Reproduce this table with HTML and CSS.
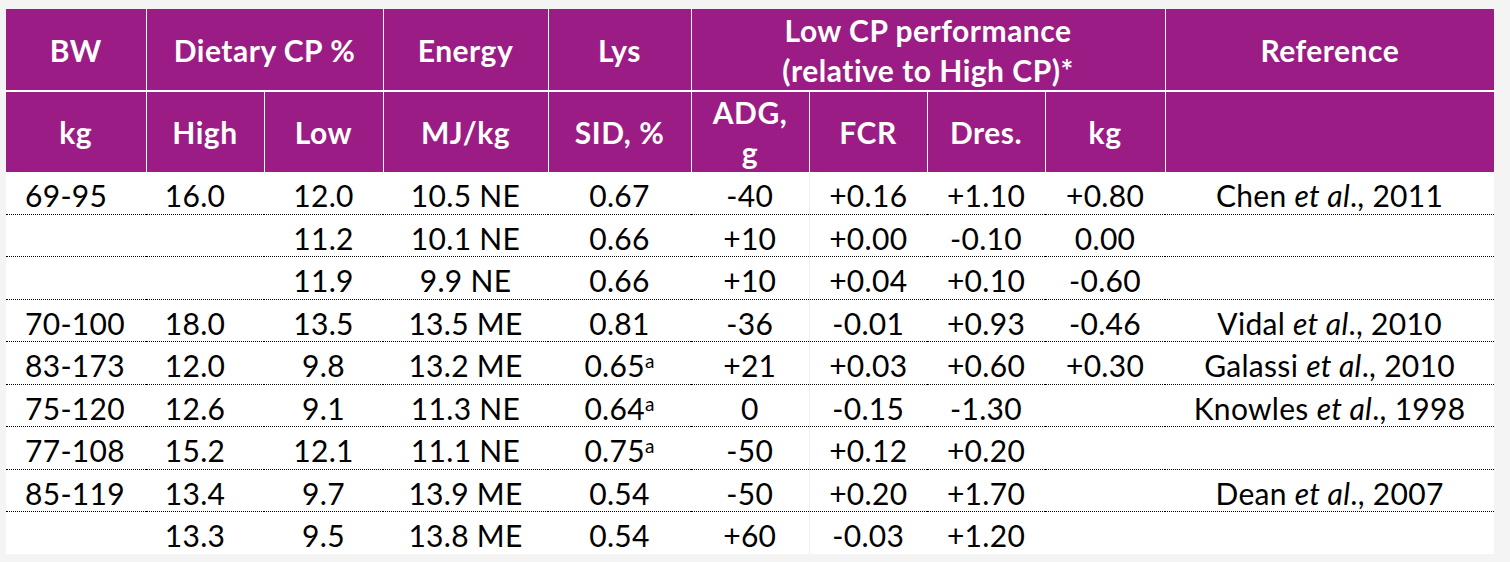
FILE: index.html
```html
<!DOCTYPE html>
<html>
<head>
<meta charset="utf-8">
<link rel="stylesheet" href="styles.css">
</head>
<body>
<table class="data">
  <colgroup>
    <col class="c-bw"><col class="c-high"><col class="c-low"><col class="c-energy"><col class="c-lys">
    <col class="c-adg"><col class="c-fcr"><col class="c-dres"><col class="c-kg"><col class="c-ref">
  </colgroup>
  <thead>
    <tr class="h1">
      <th>BW</th>
      <th colspan="2">Dietary CP %</th>
      <th>Energy</th>
      <th>Lys</th>
      <th colspan="4">Low CP performance<br>(relative to High CP)*</th>
      <th>Reference</th>
    </tr>
    <tr class="h2">
      <th>kg</th>
      <th>High</th>
      <th>Low</th>
      <th>MJ/kg</th>
      <th>SID, %</th>
      <th>ADG,<br>g</th>
      <th>FCR</th>
      <th>Dres.</th>
      <th>kg</th>
      <th></th>
    </tr>
  </thead>
  <tbody>
    <tr><td class="bw">69-95</td><td class="hi">16.0</td><td>12.0</td><td>10.5 NE</td><td>0.67</td><td>-40</td><td class="fcr">+0.16</td><td>+1.10</td><td>+0.80</td><td>Chen <i>et al</i>., 2011</td></tr>
    <tr><td class="bw"></td><td class="hi"></td><td>11.2</td><td>10.1 NE</td><td>0.66</td><td>+10</td><td class="fcr">+0.00</td><td>-0.10</td><td>0.00</td><td></td></tr>
    <tr><td class="bw"></td><td class="hi"></td><td>11.9</td><td>9.9 NE</td><td>0.66</td><td>+10</td><td class="fcr">+0.04</td><td>+0.10</td><td>-0.60</td><td></td></tr>
    <tr><td class="bw">70-100</td><td class="hi">18.0</td><td>13.5</td><td>13.5 ME</td><td>0.81</td><td>-36</td><td class="fcr">-0.01</td><td>+0.93</td><td>-0.46</td><td>Vidal <i>et al</i>., 2010</td></tr>
    <tr><td class="bw">83-173</td><td class="hi">12.0</td><td>9.8</td><td>13.2 ME</td><td>0.65<sup>a</sup></td><td>+21</td><td class="fcr">+0.03</td><td>+0.60</td><td>+0.30</td><td>Galassi <i>et al</i>., 2010</td></tr>
    <tr><td class="bw">75-120</td><td class="hi">12.6</td><td>9.1</td><td>11.3 NE</td><td>0.64<sup>a</sup></td><td>0</td><td class="fcr">-0.15</td><td>-1.30</td><td></td><td>Knowles <i>et al</i>., 1998</td></tr>
    <tr><td class="bw">77-108</td><td class="hi">15.2</td><td>12.1</td><td>11.1 NE</td><td>0.75<sup>a</sup></td><td>-50</td><td class="fcr">+0.12</td><td>+0.20</td><td></td><td></td></tr>
    <tr><td class="bw">85-119</td><td class="hi">13.4</td><td>9.7</td><td>13.9 ME</td><td>0.54</td><td>-50</td><td class="fcr">+0.20</td><td>+1.70</td><td></td><td>Dean <i>et al</i>., 2007</td></tr>
    <tr><td class="bw"></td><td class="hi">13.3</td><td>9.5</td><td>13.8 ME</td><td>0.54</td><td>+60</td><td class="fcr">-0.03</td><td>+1.20</td><td></td><td></td></tr>
  </tbody>
</table>
</body>
</html>
```
FILE: styles.css
```css
html, body {
  margin: 0;
  background: #f4f4f4;
}
body {
  padding: 9px 0 0 6px;
  font-family: Lato, "Noto Sans", sans-serif;
}
.data {
  border-collapse: collapse;
  table-layout: fixed;
  width: 1488px;
  background: #fff;
  color: #000;
}
.c-bw { width: 140px; }
.c-high { width: 118px; }
.c-low { width: 119px; }
.c-energy { width: 165px; }
.c-lys { width: 143px; }
.c-adg { width: 118px; }
.c-fcr { width: 118px; }
.c-dres { width: 118px; }
.c-kg { width: 120px; }
.c-ref { width: 329px; }

.data th {
  background: #9b1c84;
  color: #fff;
  font-weight: 700;
  font-size: 30px;
  letter-spacing: 0.5px;
  line-height: 40px;
  height: 81px;
  padding: 0;
  text-align: center;
  vertical-align: middle;
  border-left: 1px solid #fff;
  border-right: 1px solid #fff;
}
.data th:first-child { border-left: none; }
.data th:last-child { border-right: none; }
.data tr.h1 th { border-bottom: 2px solid #fff; }
.data tr.h2 th { height: 80px; }

.data td {
  font-size: 30px;
  letter-spacing: 0.3px;
  line-height: 35.5px;
  padding: 6px 0 0 0;
  text-align: center;
  vertical-align: middle;
  white-space: nowrap;
}
.data tbody tr { border-bottom: 1px dotted #000; }
.data tbody tr:last-child { border-bottom: none; }
.data td.bw { text-align: left; padding-left: 19px; }
.data td.hi { padding-right: 20px; }
.data td.fcr { border-left: 1px solid #eeeeee; }
.data sup {
  font-size: 19px;
  line-height: 0;
  vertical-align: 9px;
}
```
